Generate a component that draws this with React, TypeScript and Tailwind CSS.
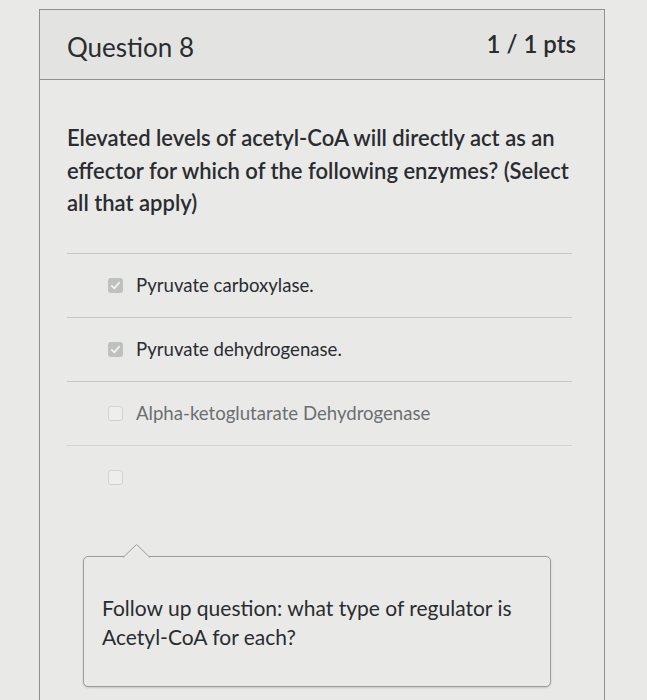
import React from 'react';

const answers = [
  { label: 'Pyruvate carboxylase.', checked: true },
  { label: 'Pyruvate dehydrogenase.', checked: true },
  { label: 'Alpha-ketoglutarate Dehydrogenase', checked: false },
  { label: '', checked: false },
];

function Box({ checked }: { checked: boolean }) {
  if (checked) {
    return (
      <span className="flex h-[15px] w-[15px] shrink-0 items-center justify-center rounded-[3px] bg-[#bfc1bf]">
        <svg width="11" height="11" viewBox="0 0 12 12" fill="none">
          <path d="M2 6.5l2.6 2.6L10 3" stroke="#f4f4f2" strokeWidth="2" strokeLinecap="round" strokeLinejoin="round" />
        </svg>
      </span>
    );
  }
  return <span className="h-[15px] w-[15px] shrink-0 rounded-[3px] border border-[#d2d3d1] bg-[#eeefed]" />;
}

export default function App() {
  return (
    <div className="min-h-[700px] overflow-hidden bg-[#e9eae8] pt-[9px] pl-[39px] font-['Lato','Liberation_Sans',sans-serif] text-[#2a2c2f]">
      <div className="h-[720px] w-[566px] border border-b-0 border-[#8e908e]">
        {/* header */}
        <div className="flex h-[70px] items-start justify-between border-b border-[#8e908e] bg-[#e3e4e2] pl-[27px] pr-[28px]">
          <h2 className="mt-[21px] text-[26px] leading-[32px]">Question 8</h2>
          <span className="mt-[19px] text-[24px] font-semibold leading-[30px]">1 / 1 pts</span>
        </div>

        {/* body */}
        <div className="px-[27px] pt-[42px]">
          <p className="w-[510px] text-[22px] font-semibold leading-[32.5px]">
            Elevated levels of acetyl-CoA will directly act as an effector for which of the following enzymes? (Select all that apply)
          </p>

          <div className="mt-[33px] mr-[5px]">
            {answers.map((a, i) => (
              <div
                key={i}
                className={`flex h-[64px] items-center gap-[13px] pl-[41px] border-t ${i === 3 ? 'border-[#d3d5d3]' : 'border-[#c6c8c6]'}`}
              >
                <Box checked={a.checked} />
                <span className={`text-[18.6px] leading-[24px] ${a.checked ? 'text-[#2a2c2f]' : 'text-[#6c6f71]'}`}>{a.label}</span>
              </div>
            ))}
          </div>

          {/* follow up comment */}
          <div className="relative mt-[47px] ml-[16px] h-[131px] w-[468px] rounded-[5px] border border-[#9a9c9a] bg-[#e9eae8] shadow-[0_1px_2px_rgba(0,0,0,0.15)]">
            <svg className="absolute left-[39px] top-[-13px]" width="27" height="14" viewBox="0 0 27 14">
              <path d="M0 13.5 L13.5 0.5 L27 13.5" fill="#e9eae8" stroke="#9a9c9a" strokeWidth="1" />
            </svg>
            <p className="px-[18px] pt-[36px] text-[21px] leading-[29px]">
              Follow up question: what type of regulator is Acetyl-CoA for each?
            </p>
          </div>
        </div>
      </div>
    </div>
  );
}
